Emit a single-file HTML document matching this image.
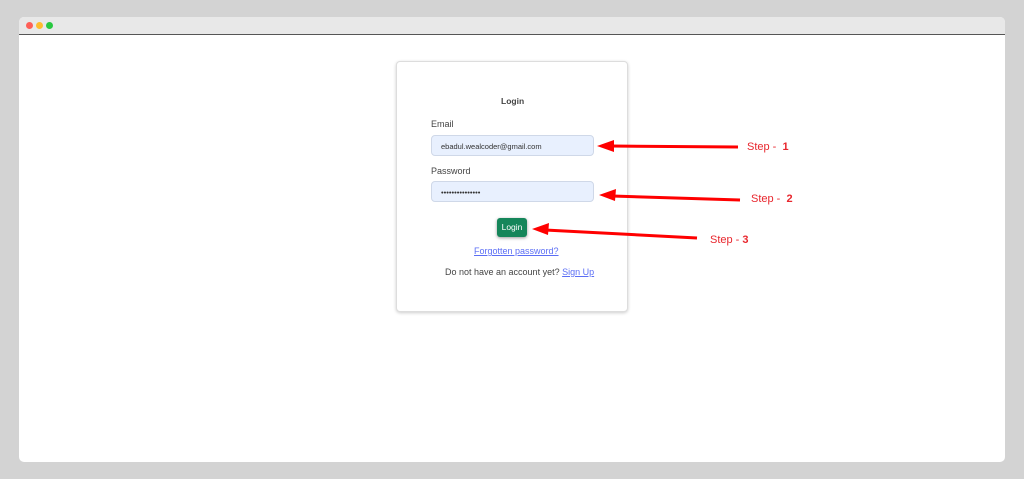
<!DOCTYPE html>
<html><head><style>
body{margin:0;width:1024px;height:479px;background:#d3d3d3;position:relative;overflow:hidden;font-family:"Liberation Sans",sans-serif}
.win{position:absolute;left:19px;top:17px;width:986px;height:445px;background:#fff;border-radius:5px;overflow:hidden}
.bar{height:17px;background:#e8e8e8;border-bottom:1px solid #555}
.dot{position:absolute;top:5px;width:7px;height:7px;border-radius:50%}
.card{position:absolute;left:396px;top:61px;width:230px;height:249px;border:1px solid #ddd;border-radius:4px;box-shadow:0 1px 3px rgba(0,0,0,.2);background:#fff}
.t{position:absolute;font-size:9px;color:#444}
.in{position:absolute;left:34px;width:163px;height:21px;background:#e8f0fe;border:1px solid #cfd8e8;border-radius:4px;font-size:7.5px;color:#333;line-height:21px;padding-left:9px;box-sizing:border-box}
.btn{position:absolute;left:100px;top:156px;width:30px;height:19px;background:#15865a;border-radius:3px;color:#fff;font-size:8.5px;text-align:center;line-height:19px;box-shadow:0 1px 3px rgba(0,0,0,.4)}
a{color:#5b6ef5;text-decoration:underline}
.s{position:absolute;color:#e8262d;font-size:11px}
</style></head><body>
<div class="win"><div class="bar"></div>
<div class="dot" style="left:7px;background:#fe5f57"></div>
<div class="dot" style="left:17px;background:#febc2e"></div>
<div class="dot" style="left:27px;background:#28c840"></div>
</div>
<div class="card">
<div class="t" style="left:104px;top:34px;font-weight:bold;font-size:8.5px">Login</div>
<div class="t" style="left:34px;top:57px">Email</div>
<div class="in" style="top:73px">ebadul.wealcoder@gmail.com</div>
<div class="t" style="left:34px;top:104px">Password</div>
<div class="in" style="top:119px">•••••••••••••••</div>
<div class="btn">Login</div>
<div class="t" style="left:77px;top:184px"><a>Forgotten password?</a></div>
<div class="t" style="left:48px;top:205px">Do not have an account yet? <a>Sign Up</a></div>
</div>
<svg width="1024" height="479" style="position:absolute;left:0;top:0">
<g stroke="#f00" stroke-width="3" fill="#f00">
<line x1="738" y1="147" x2="610" y2="146"/><polygon points="597,146 614,140 614,152" stroke="none"/>
<line x1="740" y1="200" x2="612" y2="196"/><polygon points="599,195 616,189 615,201" stroke="none"/>
<line x1="697" y1="238" x2="545" y2="230"/><polygon points="532,229 549,223 548,235" stroke="none"/>
</g></svg>
<div class="s" style="left:747px;top:141px">Step -&nbsp; <b>1</b></div>
<div class="s" style="left:751px;top:193px">Step -&nbsp; <b>2</b></div>
<div class="s" style="left:710px;top:234px">Step - <b>3</b></div>
</body></html>
